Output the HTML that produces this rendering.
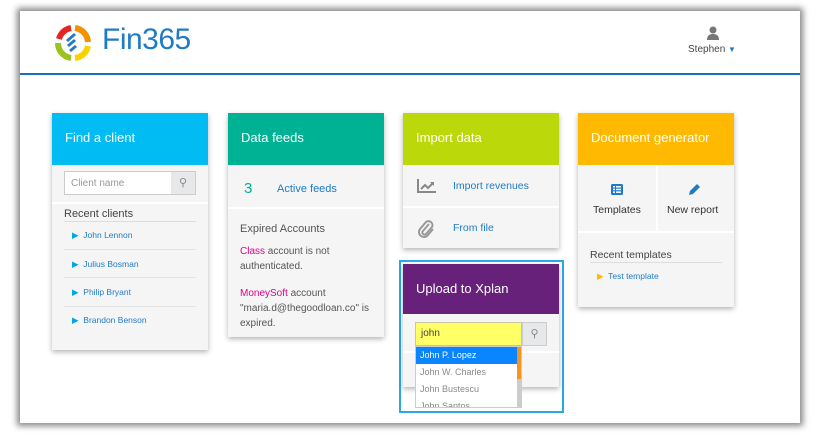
<!DOCTYPE html>
<html><head><meta charset="utf-8"><style>
*{box-sizing:border-box;margin:0;padding:0}
body{width:814px;height:447px;background:#fff;font-family:"Liberation Sans",sans-serif;position:relative;overflow:hidden}
.page{position:absolute;left:20px;top:11px;width:780px;height:412px;background:#fff;box-shadow:0 0 6px 3px #888}
.abs{position:absolute}
.card{position:absolute;background:#f5f5f5;box-shadow:0 2px 5px rgba(0,0,0,.3)}
.hd{height:52px;color:#fff;font-size:13px;padding:17px 0 0 13px}
a,.lnk{color:#1f7bc6}
.sep{border-top:1px solid #e2e2e2}
</style></head><body>
<div class="page">
 <svg class="abs" style="left:33px;top:12px" width="40" height="40" viewBox="0 0 40 40">
  <g fill="none" stroke-width="6">
   <path d="M6 16 A15 15 0 0 1 18 5" stroke="#e52620"/>
   <path d="M22 5 A15 15 0 0 1 35 19" stroke="#f39200"/>
   <path d="M35 23 A15 15 0 0 1 22 35" stroke="#f7d300"/>
   <path d="M18 35 A15 15 0 0 1 5 20" stroke="#9ac31c"/>
  </g>
  <g fill="#1f7bc6"><path d="M13 17l8-7 2 2-8 7z"/><path d="M14 22l7-6 2 2-7 6z"/><path d="M16 27l6-5 2 2-6 5z"/></g>
 </svg>
 <div class="abs" style="left:82px;top:12px;font-size:30px;color:#1f7bc6;letter-spacing:-0.5px">Fin365</div>
 <svg class="abs" style="left:686px;top:15px" width="14" height="14" viewBox="0 0 14 14"><circle cx="7" cy="4" r="3.5" fill="#777"/><path d="M1 14c0-5 3-6 6-6s6 1 6 6z" fill="#777"/></svg>
 <div class="abs" style="left:668px;top:33px;font-size:10px;color:#444">Stephen <span style="color:#1f7bc6;font-size:8px">▼</span></div>
 <div class="abs" style="left:0;top:62px;width:780px;height:2px;background:#1a6fb8"></div>
</div>

<div class="card" style="left:52px;top:113px;width:156px;height:237px">
 <div class="hd" style="background:#00bcf2">Find a client</div>
 <div class="abs" style="left:12px;top:58px;width:132px;height:24px;border:1px solid #ccc;background:#fff;font-size:10px;color:#999;padding:6px 0 0 6px">Client name</div>
 <div class="abs" style="left:119px;top:59px;width:24px;height:22px;background:#e6e8ea;color:#888;font-size:11px;text-align:center;padding-top:4px">&#9906;</div>
 <div class="sep abs" style="left:0;top:89px;width:156px;border-color:#fff;border-top-width:2px"></div>
 <div class="abs" style="left:12px;top:95px;width:132px;font-size:11px;color:#444;border-bottom:1px solid #ddd;padding-bottom:1px">Recent clients</div>
 <div class="abs" style="left:12px;top:110px;width:132px;font-size:8.5px">
  <div style="height:27px;padding:7px 0 0 8px;border-bottom:1px solid #e3e3e3" class="lnk"><span style="color:#00a6e6">▶</span>&nbsp; John Lennon</div>
  <div style="height:28px;padding:9px 0 0 8px;border-bottom:1px solid #e3e3e3" class="lnk"><span style="color:#00a6e6">▶</span>&nbsp; Julius Bosman</div>
  <div style="height:29px;padding:9px 0 0 8px;border-bottom:1px solid #e3e3e3" class="lnk"><span style="color:#00a6e6">▶</span>&nbsp; Philip Bryant</div>
  <div style="height:28px;padding:8px 0 0 8px" class="lnk"><span style="color:#00a6e6">▶</span>&nbsp; Brandon Benson</div>
 </div>
</div>

<div class="card" style="left:228px;top:113px;width:156px;height:224px">
 <div class="hd" style="background:#00b294">Data feeds</div>
 <div class="abs" style="left:16px;top:67px;font-size:15px;color:#00b294">3</div>
 <div class="abs lnk" style="left:49px;top:70px;font-size:11px">Active feeds</div>
 <div class="abs" style="left:0;top:94px;width:156px;height:2px;background:#fff"></div>
 <div class="abs" style="left:12px;top:110px;font-size:11px;color:#555">Expired Accounts</div>
 <div class="abs" style="left:12px;top:131px;width:144px;font-size:10px;color:#555;line-height:15px"><span style="color:#e3008c">Class</span> account is not authenticated.<div style="height:12px"></div><span style="color:#e3008c">MoneySoft</span> account "maria.d@thegoodloan.co" is expired.</div>
</div>

<div class="card" style="left:403px;top:113px;width:156px;height:135px">
 <div class="hd" style="background:#bad80a">Import data</div>
 <svg class="abs" style="left:14px;top:66px" width="20" height="14" viewBox="0 0 20 14"><path d="M1 0v13h18" stroke="#888" stroke-width="2" fill="none"/><path d="M4 10l4-4 3 3 5-5" stroke="#888" stroke-width="2" fill="none"/><path d="M13 3h4v4z" fill="#888"/></svg>
 <div class="abs lnk" style="left:50px;top:67px;font-size:10.5px">Import revenues</div>
 <div class="abs" style="left:0;top:93px;width:156px;height:2px;background:#fff"></div>
 <svg class="abs" style="left:15px;top:106px" width="16" height="20" viewBox="0 0 16 20"><path d="M11 5l-6 7a2 2 0 0 0 3 3l6-7a4 4 0 0 0-6-5l-6 7a5 5 0 0 0 8 6l5-6" stroke="#999" stroke-width="2" fill="none"/></svg>
 <div class="abs lnk" style="left:50px;top:109px;font-size:10.5px">From file</div>
</div>

<div class="abs" style="left:399px;top:260px;width:165px;height:153px;border:2px solid #2aa8e6"></div>
<div class="card" style="left:403px;top:264px;width:156px;height:123px">
 <div class="hd" style="background:#68217a;height:50px;padding-top:17px">Upload to Xplan</div>
 <div class="abs" style="left:0;top:87px;width:156px;height:2px;background:#fff"></div>
</div>
<div class="abs" style="left:415px;top:322px;width:107px;height:24px;background:#ffff66;border:1px solid #c8c8a0;font-size:10px;color:#444;padding:5px 0 0 5px">john</div>
<div class="abs" style="left:522px;top:322px;width:25px;height:24px;background:#e6e8ea;border:1px solid #ccc;color:#888;font-size:11px;text-align:center;padding-top:4px">&#9906;</div>
<div class="abs" style="left:415px;top:346px;width:107px;height:62px;background:#fff;border:1px solid #ccc;overflow:hidden;font-size:9px;color:#888">
 <div style="background:#0a84ff;color:#fff;height:17px;padding:3px 0 0 4px">John P. Lopez</div>
 <div style="height:17px;padding:3px 0 0 4px">John W. Charles</div>
 <div style="height:17px;padding:3px 0 0 4px">John Bustescu</div>
 <div style="height:17px;padding:3px 0 0 4px">John Santos</div>
 <div class="abs" style="right:0;top:0;width:4px;height:62px;background:#ccc"></div>
 <div class="abs" style="right:0;top:0;width:4px;height:32px;background:#f7941d"></div>
</div>

<div class="card" style="left:578px;top:113px;width:156px;height:194px">
 <div class="hd" style="background:#ffb900">Document generator</div>
 <div class="abs" style="left:78px;top:52px;width:2px;height:66px;background:#fff"></div>
 <svg class="abs" style="left:33px;top:71px" width="12" height="11" viewBox="0 0 12 11"><rect width="12" height="11" rx="1.5" fill="#1f7bc6"/><g fill="#fff"><rect x="2" y="2" width="2" height="1.5"/><rect x="5" y="2" width="5" height="1.5"/><rect x="2" y="4.7" width="2" height="1.5"/><rect x="5" y="4.7" width="5" height="1.5"/><rect x="2" y="7.4" width="2" height="1.5"/><rect x="5" y="7.4" width="5" height="1.5"/></g></svg>
 <div class="abs" style="left:15px;top:91px;font-size:10.5px;color:#333">Templates</div>
 <svg class="abs" style="left:110px;top:70px" width="13" height="13" viewBox="0 0 13 13"><path d="M1 12l1-4 7-7 3 3-7 7z" fill="#1f7bc6"/></svg>
 <div class="abs" style="left:89px;top:91px;font-size:10.5px;color:#333">New report</div>
 <div class="abs" style="left:0;top:118px;width:156px;height:2px;background:#fff"></div>
 <div class="abs" style="left:12px;top:136px;width:132px;font-size:10.5px;color:#444;border-bottom:1px solid #ddd;padding-bottom:1px">Recent templates</div>
 <div class="abs lnk" style="left:19px;top:158px;font-size:8.5px"><span style="color:#ffb900">▶</span>&nbsp; Test template</div>
</div>
</body></html>
